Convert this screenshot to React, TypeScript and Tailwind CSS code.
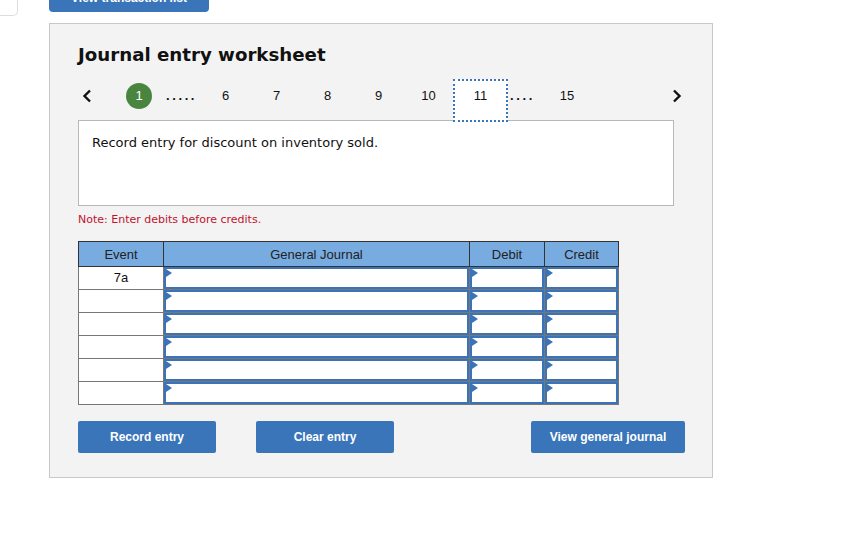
import React from "react";

const BLUE = "bg-[#3a75b9]";

const Chevron = ({ dir }: { dir: "left" | "right" }) => (
    <svg width="10" height="14" viewBox="0 0 10 14" fill="none">
        <path
            d={dir === "left" ? "M8 1.5 L2.5 7 L8 12.5" : "M2 1.5 L7.5 7 L2 12.5"}
            stroke="#111"
            strokeWidth="2.4"
        />
    </svg>
);

const InputCell = () => (
    <td className="border border-[#777] p-0 h-[22px]">
        <div className="relative h-[22px] border-2 border-[#3b73b9] bg-white">
            <span className="absolute top-0 left-0 w-0 h-0 border-y-[4px] border-y-transparent border-l-[6px] border-l-[#3b73b9]" />
        </div>
    </td>
);

const App: React.FC = () => {
    const rows = ["7a", "", "", "", "", ""];
    const nums = [
        { n: "6", w: "w-[51px]" },
        { n: "7", w: "w-[51px]" },
        { n: "8", w: "w-[51px]" },
        { n: "9", w: "w-[51px]" },
        { n: "10", w: "w-[49px]" },
    ];

    return (
        <div className="bg-white min-h-[542px] w-[844px] font-['Liberation_Sans',Arial,sans-serif] text-[#111]">
            <div className="flex flex-row items-start">
                <div className="w-[18px] h-[16px] bg-white border-r border-b border-[#ddd] rounded-br-[5px]" />
                <div className={`ml-[31px] w-[160px] h-[12px] overflow-hidden rounded-b-[4px] ${BLUE} text-center`}>
                    <span className="block mt-[-9px] text-white font-bold text-[12px] leading-[14px]">
                        View transaction list
                    </span>
                </div>
            </div>

            <div className="ml-[49px] mt-[7px] w-[664px] h-[455px] bg-[#f3f3f3] border border-[#c8c8c8] pl-[28px] pt-[19px]">
                <h2 className="font-['DejaVu_Sans',Verdana,sans-serif] font-bold text-[18.2px] leading-[24px] text-[#111]">
                    Journal entry worksheet
                </h2>

                <div className="flex flex-row items-center h-[34px] mt-[12px] text-[13px]">
                    <div className="w-[18px] flex justify-center">
                        <Chevron dir="left" />
                    </div>
                    <div className="ml-[30px] w-[26px] h-[26px] rounded-full bg-[#4a8540] text-white flex items-center justify-center">
                        1
                    </div>
                    <span className="ml-[14px] w-[34px] font-bold tracking-[2.6px] text-[13px]">.....</span>
                    {nums.map((x) => (
                        <div key={x.n} className={`${x.w} text-center`}>{x.n}</div>
                    ))}
                    <div className="relative z-10 self-start w-[55px] h-[43px] bg-white border-2 border-dotted border-[#3a75b9] text-center pt-[6px] leading-[18px]">
                        11
                    </div>
                    <span className="ml-[2px] w-[34px] font-bold tracking-[2.6px]">....</span>
                    <div className="w-[46px] text-center">15</div>
                    <div className="ml-[82px] w-[10px] flex justify-center">
                        <Chevron dir="right" />
                    </div>
                </div>

                <div className="mt-[7px] w-[596px] h-[86px] bg-white border border-[#b8b8b8] pl-[13px] pt-[13px]">
                    <p className="font-['DejaVu_Sans',Verdana,sans-serif] text-[13px] leading-[18px] text-[#111]">
                        Record entry for discount on inventory sold.
                    </p>
                </div>

                <p className="mt-[6px] font-['DejaVu_Sans',Verdana,sans-serif] text-[11px] leading-[16px] text-[#c0122e]">
                    Note: Enter debits before credits.
                </p>

                <table className="mt-[13px] border-collapse border border-[#777] w-[540px] text-[13px] table-fixed">
                    <thead>
                        <tr className="bg-[#78abe0] h-[25px] text-[#222]">
                            <th className="w-[85px] border border-[#333] font-normal pt-[1px]">Event</th>
                            <th className="w-[306px] border border-[#333] font-normal pt-[1px]">General Journal</th>
                            <th className="w-[75px] border border-[#333] font-normal pt-[1px]">Debit</th>
                            <th className="w-[74px] border border-[#333] font-normal pt-[1px]">Credit</th>
                        </tr>
                    </thead>
                    <tbody>
                        {rows.map((ev, i) => (
                            <tr key={i}>
                                <td className="bg-white border border-[#777] text-center align-top leading-[22px] h-[22px]">{ev}</td>
                                <InputCell />
                                <InputCell />
                                <InputCell />
                            </tr>
                        ))}
                    </tbody>
                </table>

                <div className="flex flex-row mt-[16px]">
                    <button className={`w-[138px] h-[32px] rounded-[2px] ${BLUE} text-white font-bold text-[12px]`}>
                        Record entry
                    </button>
                    <button className={`ml-[40px] w-[138px] h-[32px] rounded-[2px] ${BLUE} text-white font-bold text-[12px]`}>
                        Clear entry
                    </button>
                    <button className={`ml-[137px] w-[154px] h-[32px] rounded-[2px] ${BLUE} text-white font-bold text-[12px]`}>
                        View general journal
                    </button>
                </div>
            </div>
        </div>
    );
};

export default App;
